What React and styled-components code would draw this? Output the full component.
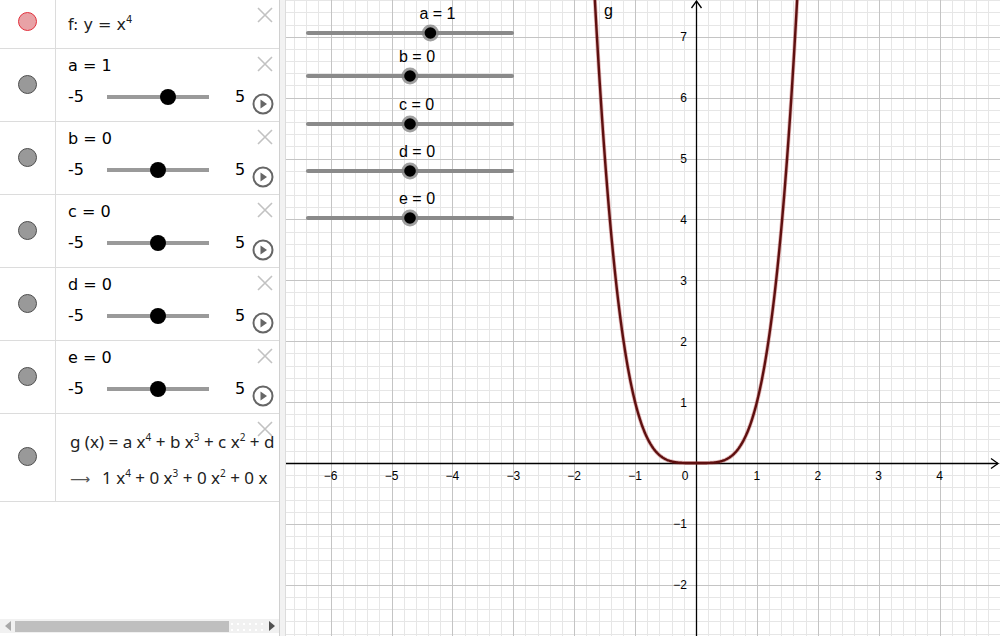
import React from "react";
import styled, { createGlobalStyle } from "styled-components";

const GlobalStyle = createGlobalStyle`
  html, body {
    margin: 0;
    padding: 0;
    overflow: hidden;
    background: #fff;
  }
  #root {
    width: 1000px;
    height: 636px;
  }
`;

const U = 60.9;
const OX = 410;
const OY = 463;
const W = 714;
const H = 636;

const sliders = [
  { name: "a", value: 1 },
  { name: "b", value: 0 },
  { name: "c", value: 0 },
  { name: "d", value: 0 },
  { name: "e", value: 0 },
];
const canvasSliderY = [33, 76, 124, 171, 218];

const Page = styled.div`
  display: flex;
  width: 1000px;
  height: 636px;
`;

const Algebra = styled.div`
  width: 279px;
  height: 636px;
  border-right: 1px solid #d0d0d0;
  display: flex;
  flex-direction: column;
  overflow: hidden;
  background: #fff;
  font-family: "DejaVu Sans", sans-serif;
  font-size: 16px;
  color: #000;
`;

const Divider = styled.div`
  width: 5px;
  height: 636px;
  background: #f2f2f2;
  border-right: 1px solid #dcdcdc;
`;

const Row = styled.div`
  display: flex;
  height: ${(p) => p.h}px;
  border-bottom: 1px solid #dcdcdc;
  box-sizing: border-box;
`;

const MarkerCell = styled.div`
  width: 56px;
  border-right: 1px solid #dcdcdc;
  display: flex;
  justify-content: center;
  align-items: ${(p) => (p.top ? "flex-start" : "center")};
  padding-top: ${(p) => (p.top ? `${p.top}px` : "0")};
  padding-bottom: ${(p) => (p.top ? "0" : "2px")};
  box-sizing: border-box;
`;

const Marker = styled.div`
  width: 19px;
  height: 19px;
  border-radius: 50%;
  box-sizing: border-box;
  background: ${(p) => (p.red ? "#e8a2a6" : "#999999")};
  border: 1px solid ${(p) => (p.red ? "#e2303c" : "#4d4d4d")};
`;

const Content = styled.div`
  position: relative;
  flex: 1;
  padding-left: 12px;
  white-space: nowrap;
  overflow: hidden;
`;

const FormulaLine = styled.div`
  font-family: ${(p) => (p.wide ? '"DejaVu Sans"' : '"Noto Sans", "DejaVu Sans"')}, sans-serif;
  font-size: ${(p) => (p.wide ? 16 : 17)}px;
  color: #222;
  line-height: 20px;
  margin-top: ${(p) => p.mt}px;
  padding-left: ${(p) => p.pl || 0}px;
`;

const Sup = styled.sup`
  font-size: 10px;
  vertical-align: 7px;
  line-height: 0;
`;

const Arrow = styled.span`
  display: inline-block;
  width: 32px;
  color: #555;
  font-size: 14px;
`;

const NameLine = styled.div`
  line-height: 20px;
  margin-top: 7px;
`;

const SliderLine = styled.div`
  display: flex;
  align-items: flex-start;
  margin-top: 11px;
  height: 30px;
`;

const MinLabel = styled.div`
  width: 39px;
  line-height: 20px;
`;

const MaxLabel = styled.div`
  width: 10px;
  margin-left: 26px;
  line-height: 20px;
`;

const Track = styled.div`
  position: relative;
  width: 102px;
  height: 20px;
  &::before {
    content: "";
    position: absolute;
    left: 0;
    right: 0;
    top: 8px;
    height: 4px;
    background: #9a9a9a;
  }
`;

const Knob = styled.div`
  position: absolute;
  top: 2px;
  width: 16px;
  height: 16px;
  margin-left: -8px;
  border-radius: 50%;
  background: #000;
`;

const PlayButton = styled.div`
  margin-left: 7px;
  margin-top: 6px;
  width: 22px;
  height: 22px;
`;

const CloseButton = styled.div`
  position: absolute;
  top: ${(p) => p.top || 7}px;
  right: 6px;
  width: 16px;
  height: 16px;
`;

const Spacer = styled.div`
  flex: 1;
`;

const ScrollBar = styled.div`
  display: flex;
  align-items: center;
  height: 14px;
  margin-bottom: 3px;
  background-color: #f1f1f1;
`;

const ScrollArrow = styled.div`
  width: 15px;
  display: flex;
  justify-content: center;
`;

const ScrollThumb = styled.div`
  width: 214px;
  height: 11px;
  background: #bfbfbf;
`;

const ScrollRest = styled.div`
  flex: 1;
  height: 11px;
  background-image: radial-gradient(#ffffff 0.8px, transparent 1px);
  background-size: 6px 6px;
`;

const Graphics = styled.div`
  flex: 1;
  height: 636px;
  background: #fff;
  overflow: hidden;
`;

const Close = ({ top }) => (
  <CloseButton top={top}>
    <svg width="16" height="16" viewBox="0 0 16 16">
      <path d="M1 1 L15 15 M15 1 L1 15" stroke="#c2c2c2" strokeWidth="1.6" />
    </svg>
  </CloseButton>
);

const Play = () => (
  <PlayButton>
    <svg width="22" height="22" viewBox="0 0 22 22">
      <circle cx="11" cy="11" r="9.5" fill="none" stroke="#666" strokeWidth="2" />
      <path d="M8.5 6.5 L15 11 L8.5 15.5 Z" fill="#666" />
    </svg>
  </PlayButton>
);

const SliderRow = ({ name, value }) => (
  <Row h={73}>
    <MarkerCell>
      <Marker />
    </MarkerCell>
    <Content>
      <NameLine>
        {name} = {value}
      </NameLine>
      <SliderLine>
        <MinLabel>-5</MinLabel>
        <Track>
          <Knob style={{ left: `${((value + 5) / 10) * 100}%` }} />
        </Track>
        <MaxLabel>5</MaxLabel>
        <Play />
      </SliderLine>
      <Close />
    </Content>
  </Row>
);

const Grid = () => {
  const step = U / 5;
  const minor = [];
  const major = [];
  for (let k = Math.ceil(-OX / step); k <= Math.floor((W - OX) / step); k++) {
    const x = Math.round(OX + k * step) + 0.5;
    (k % 5 === 0 ? major : minor).push(
      <line key={"x" + k} x1={x} y1={0} x2={x} y2={H} />
    );
  }
  for (let k = Math.ceil(-(H - OY) / step); k <= Math.floor(OY / step); k++) {
    const y = Math.round(OY - k * step) + 0.5;
    (k % 5 === 0 ? major : minor).push(
      <line key={"y" + k} x1={0} y1={y} x2={W} y2={y} />
    );
  }
  return (
    <>
      <g stroke="#e6e6e6" strokeWidth="1">{minor}</g>
      <g stroke="#c4c4c4" strokeWidth="1">{major}</g>
    </>
  );
};

const curvePath = () => {
  const pts = [];
  for (let x = -1.72; x <= 1.7201; x += 0.01) {
    const px = OX + x * U;
    const py = OY - Math.pow(x, 4) * U;
    pts.push(`${px.toFixed(2)},${py.toFixed(2)}`);
  }
  return "M" + pts.join(" L");
};

const Plot = () => {
  const xs = [-6, -5, -4, -3, -2, -1, 1, 2, 3, 4];
  const ys = [-2, -1, 1, 2, 3, 4, 5, 6, 7];
  const fmt = (n) => (n < 0 ? "\u2212" + Math.abs(n) : String(n));
  const d = curvePath();
  return (
    <svg width={W} height={H} viewBox={`0 0 ${W} ${H}`}>
      <Grid />
      <g stroke="#000" strokeWidth="1.3" fill="none">
        <line x1={0} y1={OY + 0.5} x2={W - 2} y2={OY + 0.5} />
        <polyline points={`${W - 9},${OY - 4.5} ${W - 2},${OY + 0.5} ${W - 9},${OY + 5.5}`} />
        <line x1={OX + 0.5} y1={H} x2={OX + 0.5} y2={1} />
        <polyline points={`${OX - 4.5},8 ${OX + 0.5},1 ${OX + 5.5},8`} />
      </g>
      <g fontFamily="'Liberation Sans', Arial, sans-serif" fontSize="12" fill="#000">
        {xs.map((n) => (
          <text key={"lx" + n} x={OX + n * U} y={OY + 17} textAnchor="middle">
            {fmt(n)}
          </text>
        ))}
        <text x={OX - 11} y={OY + 17} textAnchor="middle">0</text>
        {ys.map((n) => (
          <text key={"ly" + n} x={OX - 9} y={OY - n * U + 4.5} textAnchor="end">
            {fmt(n)}
          </text>
        ))}
      </g>
      <path d={d} fill="none" stroke="#b03030" strokeOpacity="0.35" strokeWidth="4" />
      <path d={d} fill="none" stroke="#5e1010" strokeWidth="2.4" />
      <text x={318} y={16} fontFamily="'Liberation Sans', Arial, sans-serif" fontSize="16">
        g
      </text>
      {sliders.map((s, i) => {
        const y = canvasSliderY[i];
        const kx = 22 + ((s.value + 5) / 10) * 204;
        return (
          <g key={s.name}>
            <line x1={22} y1={y} x2={226} y2={y} stroke="#8a8a8a" strokeWidth="4.2" strokeLinecap="round" />
            <circle cx={kx} cy={y} r={8.5} fill="#808080" fillOpacity="0.75" />
            <circle cx={kx} cy={y} r={5.8} fill="#000" />
            <text
              x={kx - 11}
              y={y - 14.5}
              fontFamily="'Liberation Sans', Arial, sans-serif"
              fontSize="16"
              fill="#000"
            >
              {s.name} = {s.value}
            </text>
          </g>
        );
      })}
    </svg>
  );
};

export default function App() {
  return (
    <>
      <GlobalStyle />
      <Page>
        <Algebra>
          <Row h={49}>
            <MarkerCell top={12}>
              <Marker red />
            </MarkerCell>
            <Content>
              <FormulaLine wide mt={15}>
                f: y = x<Sup>4</Sup>
              </FormulaLine>
              <Close />
            </Content>
          </Row>
          {sliders.map((s) => (
            <SliderRow key={s.name} name={s.name} value={s.value} />
          ))}
          <Row h={88}>
            <MarkerCell>
              <Marker />
            </MarkerCell>
            <Content>
              <FormulaLine mt={18} pl={2}>
                g (x) = a x<Sup>4</Sup> + b x<Sup>3</Sup> + c x<Sup>2</Sup> + d
              </FormulaLine>
              <FormulaLine mt={16} pl={2}>
                <Arrow>⟶</Arrow>1 x<Sup>4</Sup> + 0 x<Sup>3</Sup> + 0 x<Sup>2</Sup> + 0 x
              </FormulaLine>
              <Close top={7} />
            </Content>
          </Row>
          <Spacer />
          <ScrollBar>
            <ScrollArrow>
              <svg width="6" height="10" viewBox="0 0 6 10">
                <path d="M6 0 L0 5 L6 10 Z" fill="#a8a8a8" />
              </svg>
            </ScrollArrow>
            <ScrollThumb />
            <ScrollRest />
            <ScrollArrow>
              <svg width="6" height="10" viewBox="0 0 6 10">
                <path d="M0 0 L6 5 L0 10 Z" fill="#505050" />
              </svg>
            </ScrollArrow>
          </ScrollBar>
        </Algebra>
        <Divider />
        <Graphics>
          <Plot />
        </Graphics>
      </Page>
    </>
  );
}
